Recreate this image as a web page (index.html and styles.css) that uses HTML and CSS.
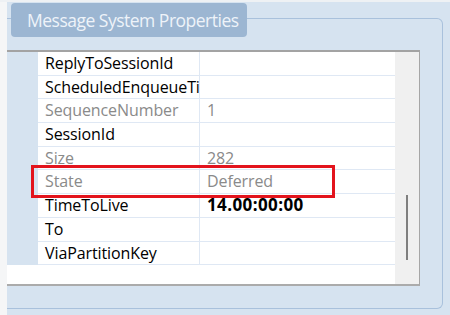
FILE: index.html
```html
<!DOCTYPE html>
<html lang="en">
<head>
  <meta charset="UTF-8">
  <title>Message System Properties</title>
  <link rel="stylesheet" href="styles.css">
</head>
<body>
  <div class="window">
    <div class="edge"></div>
    <div class="group">
      <div class="tab">Message System Properties</div>
      <div class="grid">
        <div class="rows">
          <div class="row"><span class="gutter"></span><span class="name">ReplyToSessionId</span><span class="value"></span></div>
          <div class="row"><span class="gutter"></span><span class="name">ScheduledEnqueueTimeUtc</span><span class="value"></span></div>
          <div class="row dim"><span class="gutter"></span><span class="name">SequenceNumber</span><span class="value">1</span></div>
          <div class="row"><span class="gutter"></span><span class="name">SessionId</span><span class="value"></span></div>
          <div class="row dim"><span class="gutter"></span><span class="name">Size</span><span class="value">282</span></div>
          <div class="row dim"><span class="gutter"></span><span class="name">State</span><span class="value">Deferred</span></div>
          <div class="row"><span class="gutter"></span><span class="name">TimeToLive</span><span class="value bold">14.00:00:00</span></div>
          <div class="row"><span class="gutter"></span><span class="name">To</span><span class="value"></span></div>
          <div class="row"><span class="gutter"></span><span class="name">ViaPartitionKey</span><span class="value"></span></div>
        </div>
        <div class="scrollbar"><div class="thumb"></div></div>
      </div>
    </div>
    <!-- annotation box around the State row -->
    <div class="highlight"></div>
  </div>
</body>
</html>
```

FILE: styles.css
```css
* {
  box-sizing: border-box;
}

body {
  margin: 0;
  font-family: "Open Sans", "Liberation Sans", sans-serif;
}

.window {
  position: relative;
  display: flex;
  width: 450px;
  height: 315px;
  background-color: #d6e3f0;
  border-top: 2px solid #eef1f4;
  overflow: hidden;
}

.edge {
  flex: none;
  width: 7px;
  background-color: #f5f6f7;
}

.group {
  flex: 1;
  margin: 16px 7px 6px 0;
  border: 1px solid #a9c1dc;
  border-left: none;
  border-radius: 0 6px 6px 0;
}

.tab {
  width: 236px;
  height: 34px;
  margin: -16px 0 0 4px;
  padding-left: 16px;
  line-height: 34px;
  font-size: 17.5px;
  letter-spacing: -0.5px;
  white-space: nowrap;
  overflow: hidden;
  color: #eef3f9;
  background-color: #9cb6d2;
  border-radius: 4px;
}

.grid {
  display: flex;
  width: 413px;
  height: 236px;
  margin-top: 13px;
  border-top: 2px solid #a3a3a3;
  border-right: 1px solid #a6a6a6;
  border-bottom: 2px solid #ababab;
}

.rows {
  flex: 1;
  background-color: #fff;
}

.row {
  display: grid;
  grid-template-columns: 31px 162px 1fr;
  height: 23.7px;
  font-size: 16px;
  letter-spacing: -0.1px;
  color: #000;
}

.gutter {
  background-color: #d6e3f0;
}

.name,
.value {
  padding-left: 7px;
  line-height: 22.7px;
  white-space: nowrap;
  overflow: hidden;
  border-bottom: 1px solid #dfe8f4;
}

.name {
  border-right: 1px solid #dfe8f4;
}

.dim {
  color: #8a8a8a;
}

.bold {
  font-weight: bold;
  font-size: 17px;
  letter-spacing: 0.4px;
  color: #000;
}

.scrollbar {
  flex: none;
  width: 24px;
  padding-top: 143px;
  background-color: #f0f0f0;
}

.thumb {
  width: 2px;
  height: 65px;
  margin-left: 11px;
  background-color: #7f7f7f;
}

.highlight {
  position: absolute;
  left: 31px;
  top: 163px;
  width: 304px;
  height: 33px;
  border: 3px solid #e3141d;
}
```
